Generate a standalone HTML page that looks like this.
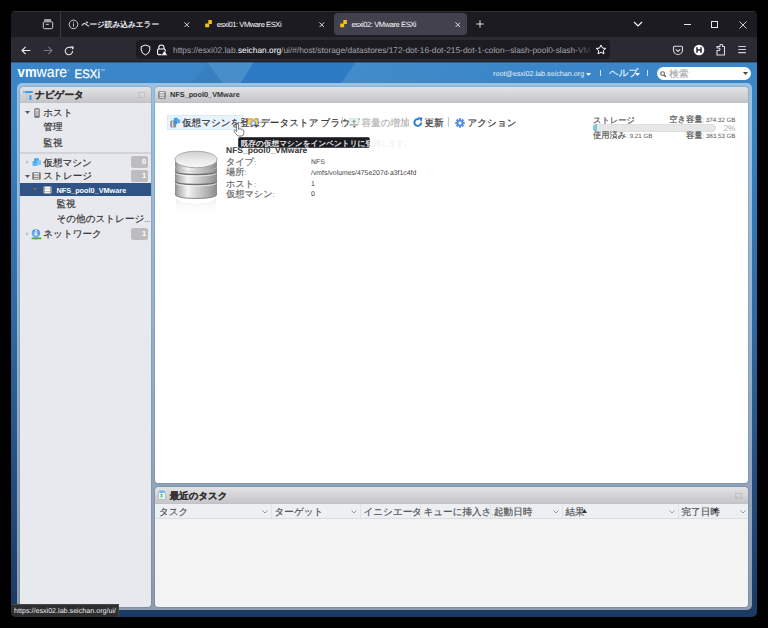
<!DOCTYPE html>
<html><head><meta charset="utf-8">
<style>
*{box-sizing:border-box;margin:0;padding:0}
html,body{width:768px;height:628px;overflow:hidden;background:#000;font-family:"Liberation Sans",sans-serif;text-rendering:geometricPrecision}
.a{position:absolute;white-space:nowrap}
.j{font-size:1.333em;line-height:0;-webkit-text-stroke:0.2px currentColor}
#win{position:absolute;left:0;top:0;width:768px;height:628px;clip-path:inset(11px 11px 11px 11px round 4px 4px 5px 5px)}
</style></head><body>
<div id="win">
  <div class="a" style="left:11px;top:11px;width:746px;height:26px;background:#1c1b22;border-top:1px solid #2e2d35"></div>
  <div class="a" style="left:60px;top:12px;width:1px;height:25px;background:#3a3940"></div>
  <div class="a" style="left:334px;top:13px;width:133px;height:22px;background:#42414d;border-radius:4px"></div>
  <div class="a" style="left:11px;top:37px;width:746px;height:25px;background:#2b2a33"></div>
  <div class="a" style="left:136px;top:40px;width:474px;height:19px;background:#1c1b22;border-radius:4px"></div>

  <!-- firefox chrome icons -->
  <svg class="a" style="left:42px;top:18px" width="12" height="12" viewBox="0 0 12 12"><path d="M2 3.2V2.4Q2 1.1 3.3 1.1H7.9Q9.2 1.1 9.2 2.4V3.2Z" fill="#a2a2a7"/><rect x="1.3" y="3.8" width="9.4" height="6.9" rx="1.2" fill="none" stroke="#cfcfd3" stroke-width="1"/><rect x="3.8" y="5.9" width="3" height="0.9" fill="#d8d8dc"/></svg>
  <svg class="a" style="left:68px;top:19px" width="11" height="11" viewBox="0 0 11 11"><circle cx="5.5" cy="5.4" r="4.3" fill="none" stroke="#d6d6da" stroke-width="0.95"/><rect x="5.05" y="4.4" width="0.9" height="3.3" fill="#d6d6da"/><rect x="5.05" y="2.7" width="0.9" height="0.9" fill="#d6d6da"/></svg>
  <svg class="a" style="left:184.1px;top:21.5px" width="5.6" height="5.6" viewBox="0 0 5.6 5.6"><path d="M0.4 0.4L5.2 5.2M5.2 0.4L0.4 5.2" stroke="#dcdce0" stroke-width="1"/></svg>
  <svg class="a" style="left:205px;top:20px" width="7" height="7.5" viewBox="0 0 7 7.5"><rect x="0.2" y="3.6" width="4" height="3.7" rx="0.5" fill="#f5c211"/><rect x="3.3" y="0.1" width="3.6" height="3.9" rx="0.5" fill="#f5c211"/></svg>
  <svg class="a" style="left:319.2px;top:21.5px" width="5.6" height="5.6" viewBox="0 0 5.6 5.6"><path d="M0.4 0.4L5.2 5.2M5.2 0.4L0.4 5.2" stroke="#dcdce0" stroke-width="1"/></svg>
  <svg class="a" style="left:340px;top:20px" width="7" height="7.5" viewBox="0 0 7 7.5"><rect x="0.2" y="3.6" width="4" height="3.7" rx="0.5" fill="#f5c211"/><rect x="3.3" y="0.1" width="3.6" height="3.9" rx="0.5" fill="#f5c211"/></svg>
  <svg class="a" style="left:454.7px;top:21.5px" width="5.6" height="5.6" viewBox="0 0 5.6 5.6"><path d="M0.4 0.4L5.2 5.2M5.2 0.4L0.4 5.2" stroke="#dcdce0" stroke-width="1"/></svg>
  <svg class="a" style="left:475px;top:19px" width="10" height="10" viewBox="0 0 10 10"><path d="M5 1.2V8.8M1.2 5H8.8" stroke="#e6e6ea" stroke-width="0.95"/></svg>
  <svg class="a" style="left:633px;top:21px" width="10" height="6" viewBox="0 0 10 6"><path d="M1 1L5 5L9 1" fill="none" stroke="#fbfbfe" stroke-width="1.1"/></svg>
  <div class="a" style="left:684px;top:23.5px;width:7px;height:1px;background:#e6e6ea"></div>
  <div class="a" style="left:711px;top:20.5px;width:7px;height:7px;border:1px solid #e6e6ea"></div>
  <svg class="a" style="left:738.5px;top:20.5px" width="8" height="8" viewBox="0 0 8 8"><path d="M0.5 0.5L7.5 7.5M7.5 0.5L0.5 7.5" stroke="#e6e6ea" stroke-width="0.9"/></svg>
  <!-- toolbar -->
  <svg class="a" style="left:21px;top:45.5px" width="10" height="9" viewBox="0 0 10 9"><path d="M9.3 4.5H1.2M4.6 0.9L1 4.5L4.6 8.1" fill="none" stroke="#ececf0" stroke-width="1.1"/></svg>
  <svg class="a" style="left:43px;top:45.5px" width="10" height="9" viewBox="0 0 10 9"><path d="M0.7 4.5H8.8M5.4 0.9L9 4.5L5.4 8.1" fill="none" stroke="#76757c" stroke-width="1.1"/></svg>
  <svg class="a" style="left:64px;top:45.5px" width="10" height="10" viewBox="0 0 10 10"><path d="M8.6 5A3.7 3.7 0 1 1 6.9 1.9" fill="none" stroke="#ececf0" stroke-width="1.05"/><path d="M6.2 0.3L9.6 0.5L9.2 3.9Z" fill="#ececf0"/></svg>
  <svg class="a" style="left:140px;top:44px" width="11" height="12" viewBox="0 0 11 12"><path d="M5.5 1L1.2 2.6V5.8Q1.5 9.4 5.5 11Q9.5 9.4 9.8 5.8V2.6Z" fill="none" stroke="#fbfbfe" stroke-width="1"/></svg>
  <svg class="a" style="left:156px;top:44px" width="12" height="12" viewBox="0 0 12 12"><path d="M2.8 5V3.6A2.6 2.6 0 0 1 8 3.6V5" fill="none" stroke="#fbfbfe" stroke-width="1.1"/><rect x="1.6" y="5" width="7.6" height="5.6" rx="1" fill="none" stroke="#fbfbfe" stroke-width="1.1"/><path d="M8.4 6.4L11.6 11.4H5.2Z" fill="#fbfbfe" stroke="#1c1b22" stroke-width="0.6"/></svg>
  <svg class="a" style="left:671.5px;top:45px" width="12" height="11" viewBox="0 0 12 11"><path d="M1.5 2.2Q1.5 1.2 2.5 1.2H9.5Q10.5 1.2 10.5 2.2V5A4.5 4.5 0 0 1 1.5 5Z" fill="none" stroke="#dcdce0" stroke-width="1.1"/><path d="M3.8 4.4L6 6.5L8.2 4.4" fill="none" stroke="#dcdce0" stroke-width="1.2"/></svg>
  <svg class="a" style="left:693px;top:44px" width="12" height="12" viewBox="0 0 12 12"><circle cx="6" cy="6" r="5.3" fill="#fbfbfe"/><path d="M4 3.2V8.8M8 3.2V8.8M4 6H8" stroke="#2b2a33" stroke-width="1.5"/></svg>
  <svg class="a" style="left:715px;top:44px" width="11" height="12" viewBox="0 0 11 12"><path d="M2 11V6.5H3.3A1.3 1.3 0 1 0 3.3 4H2V2.5H5V1.6A1.3 1.3 0 1 1 7.6 1.6V2.5H9.5V11Z" fill="none" stroke="#dcdce0" stroke-width="1.1" stroke-linejoin="round"/></svg>
  <svg class="a" style="left:738px;top:44px" width="8" height="10" viewBox="0 0 8 10"><path d="M0.3 2.4H7.9M0.3 5.5H7.9M0.3 8.6H7.9" stroke="#d0d0d4" stroke-width="1.05"/></svg>

<div class="a" style="left:81.6px;top:20px;font-size:5.74px;line-height:12px;color:#fbfbfe;"><span class="j">ページ読み込みエラー</span></div>
<div id="tab1" class="a" style="left:216.7px;top:19px;font-size:7.5px;line-height:12px;color:#fbfbfe;letter-spacing:-0.4px">esxi01: VMware ESXi</div>
<div class="a" style="left:351.6px;top:19px;font-size:7.5px;line-height:12px;color:#fbfbfe;letter-spacing:-0.4px">esxi02: VMware ESXi</div>
<div id="url" class="a" style="left:173px;top:44px;font-size:8.35px;line-height:12px;color:#a3a3a8;">https://esxi02.lab.<span style="color:#fbfbfe">seichan.org</span>/ui/#/host/storage/datastores/172-dot-16-dot-215-dot-1-colon--slash-pool0-slash-VM</div>
  <div class="a" style="left:575px;top:40px;width:18px;height:19px;background:linear-gradient(to right,rgba(28,27,34,0),#1c1b22)"></div>
  <div class="a" style="left:593px;top:40px;width:16px;height:19px;background:#1c1b22"></div>
  <svg class="a" style="left:595px;top:44px" width="12" height="11" viewBox="0 0 12 11"><path d="M6 1L7.5 4.1L10.8 4.4L8.3 6.6L9 9.9L6 8.2L3 9.9L3.7 6.6L1.2 4.4L4.5 4.1Z" fill="none" stroke="#fbfbfe" stroke-width="1" stroke-linejoin="round"/></svg>
<div class="a" style="left:11px;top:62px;width:746px;height:555px;background:linear-gradient(to bottom,#3a86c8 0px,#3783c4 60px,#2f6aa3 250px,#234d7e 420px,#1b3a63 555px)"></div>
<svg class="a" style="left:11px;top:62px" width="746" height="21" viewBox="0 0 746 21"><defs><linearGradient id="hl" x1="0" x2="1"><stop offset="0" stop-color="#fff" stop-opacity="0.05"/><stop offset="1" stop-color="#fff" stop-opacity="0"/></linearGradient></defs><polygon points="196,0 243,0 229.7,21 211.5,21" fill="#ffffff" opacity="0.08"/><polygon points="196,0 181.5,21 211.5,21" fill="#000" opacity="0.03"/><polygon points="243,0 344.6,0 330.3,21 229.7,21" fill="#1f6fc0" opacity="0.5"/><polygon points="344.6,0 520,0 520,21 330.3,21" fill="url(#hl)"/></svg>
<div class="a" style="left:11px;top:61px;width:746px;height:1px;background:#221e24"></div>
<div class="a" style="left:11px;top:62px;width:746px;height:1px;background:rgba(0,0,0,0.28)"></div>
<svg class="a" style="left:11px;top:62px" width="100" height="21" viewBox="0 0 100 21"><text x="6.6" y="14.7" font-size="15" font-weight="bold" fill="#fff" textLength="19" lengthAdjust="spacingAndGlyphs">vm</text><text x="25.6" y="14.7" font-size="15" fill="#fff" stroke="#fff" stroke-width="0.1" textLength="30.6" lengthAdjust="spacingAndGlyphs">ware</text><circle cx="57.6" cy="8.2" r="0.7" fill="#fff" opacity="0.7"/><text x="63.6" y="15.6" font-size="12.2" fill="#fff" stroke="#fff" stroke-width="0.3" textLength="25.4" lengthAdjust="spacingAndGlyphs">ESXi</text><rect x="90" y="7.5" width="4" height="1" fill="#fff" opacity="0.6"/></svg>
<div id="user" class="a" style="left:493px;top:68px;font-size:7.2px;line-height:12px;color:#e8f0f8;">root@esxi02.lab.seichan.org</div>
<svg class="a" style="left:586px;top:73px" width="5" height="3" viewBox="0 0 5 3"><path d="M0 0H5L2.5 3Z" fill="#fff"/></svg>
<div class="a" style="left:600px;top:70px;width:1px;height:6px;background:#cfe0f0"></div>
<div class="a" style="left:609px;top:68px;font-size:7.2px;line-height:12px;color:#e8f0f8;"><span class="j">ヘルプ</span></div>
<svg class="a" style="left:634.5px;top:73px" width="5" height="3" viewBox="0 0 5 3"><path d="M0 0H5L2.5 3Z" fill="#fff"/></svg>
<div class="a" style="left:647px;top:70px;width:1px;height:6px;background:#cfe0f0"></div>
<div class="a" style="left:657px;top:67px;width:94px;height:13px;background:#fff;border-radius:6.5px"></div>
<svg class="a" style="left:660.3px;top:70.5px" width="6.5" height="6.5" viewBox="0 0 6.5 6.5"><circle cx="2.6" cy="2.6" r="1.9" fill="none" stroke="#606060" stroke-width="1.1"/><path d="M4 4L6 6" stroke="#606060" stroke-width="1.3"/></svg>
<div class="a" style="left:669.3px;top:69px;font-size:7.2px;line-height:12px;color:#aaa;"><span class="j">検索</span></div>
<svg class="a" style="left:743px;top:72px" width="5" height="3" viewBox="0 0 5 3"><path d="M0 0H5L2.5 3Z" fill="#444"/></svg>
<div class="a" style="left:17px;top:83px;width:734.5px;height:527px;background:rgba(255,255,255,0.5);border-radius:5px"></div>
<div class="a" style="left:20px;top:87px;width:131px;height:520px;background:#e8e9ee;border-radius:4px 4px 3px 3px;box-shadow:0 0 1.5px rgba(0,0,0,0.5)"></div>
<div class="a" style="left:20px;top:87px;width:131px;height:15.5px;background:linear-gradient(#e3e3e5,#c6c6ca);border-radius:4px 4px 0 0;border-bottom:1px solid #c2c2c6"></div>
<svg class="a" style="left:23px;top:90px" width="10" height="10" viewBox="0 0 10 10"><rect x="0.3" y="1" width="9.4" height="2" fill="#3b9ae6"/><rect x="0.3" y="0.8" width="2.4" height="2.4" fill="#6cc0f5"/><rect x="3" y="3" width="1" height="6" fill="#b8c0cc"/><circle cx="7.4" cy="6.4" r="1.3" fill="#3b9ae6"/><circle cx="7.4" cy="8.7" r="1.3" fill="#3b9ae6"/></svg>
<div class="a" style="left:35px;top:90px;font-size:7.2px;line-height:12px;color:#333;font-weight:bold;"><span class="j">ナビゲータ</span></div>
<svg class="a" style="left:138px;top:92px" width="7" height="6" viewBox="0 0 7 6"><rect x="0.5" y="0.5" width="6" height="5" fill="#d8d8db" stroke="#c0c0c4" stroke-width="0.9"/><rect x="1" y="3" width="2.5" height="2" fill="#c4c4c7"/></svg>
<svg class="a" style="left:25px;top:111px" width="5" height="3" viewBox="0 0 5 3"><path d="M0 0H5L2.5 3Z" fill="#555"/></svg>
<svg class="a" style="left:34px;top:108px" width="6" height="10" viewBox="0 0 6 10"><rect x="0.3" y="0.3" width="5.4" height="9.4" rx="1.3" fill="#6e6e6e"/><rect x="1.2" y="1.3" width="3.6" height="6.8" rx="0.4" fill="#b8b8b8"/><rect x="1.6" y="2" width="2.8" height="1" fill="#e6e6e6"/></svg>
<div class="a" style="left:43.3px;top:108px;font-size:7.2px;line-height:12px;color:#333;"><span class="j">ホスト</span></div>
<div class="a" style="left:43.3px;top:122px;font-size:7.2px;line-height:12px;color:#333;"><span class="j">管理</span></div>
<div class="a" style="left:43.3px;top:138px;font-size:7.2px;line-height:12px;color:#333;"><span class="j">監視</span></div>
<div class="a" style="left:20px;top:152px;width:131px;height:2px;background:#d3d4d8"></div>
<svg class="a" style="left:26px;top:159.5px" width="3" height="4" viewBox="0 0 3 4"><path d="M0 0V4L3 2Z" fill="#c4c4c8"/></svg>
<svg class="a" style="left:32px;top:158px" width="9" height="8" viewBox="0 0 9 8"><rect x="0.5" y="3" width="5" height="5" rx="0.8" fill="#63b2f2"/><rect x="2" y="0.3" width="5" height="5" rx="0.8" fill="#4aa4ee"/><rect x="4.5" y="2.2" width="4.5" height="4.8" rx="0.8" fill="#7cc4f7"/></svg>
<div class="a" style="left:43.3px;top:158px;font-size:7.2px;line-height:12px;color:#333;"><span class="j">仮想マシン</span></div>
<div class="a" style="left:130.5px;top:155.5px;width:17px;height:12px;background:#bdbdbf;border-radius:2px"></div>
<div class="a" style="right:622px;top:156px;font-size:7.4px;line-height:12px;color:#fff;font-weight:bold;">0</div>
<svg class="a" style="left:25px;top:175px" width="5" height="3" viewBox="0 0 5 3"><path d="M0 0H5L2.5 3Z" fill="#555"/></svg>
<svg class="a" style="left:32px;top:172px" width="9" height="8" viewBox="0 0 9 8"><rect x="0.2" y="0.2" width="8.6" height="7.6" rx="1.3" fill="#7d7d7d"/><rect x="2" y="1" width="5" height="1.6" fill="#e8e8e8"/><rect x="2" y="3.4" width="5" height="1.6" fill="#dcdcdc"/><rect x="2" y="5.8" width="5" height="1.4" fill="#d0d0d0"/></svg>
<div class="a" style="left:43.3px;top:171px;font-size:7.2px;line-height:12px;color:#333;"><span class="j">ストレージ</span></div>
<div class="a" style="left:130.5px;top:169.5px;width:17px;height:12px;background:#bdbdbf;border-radius:2px"></div>
<div class="a" style="right:622px;top:170px;font-size:7.4px;line-height:12px;color:#fff;font-weight:bold;">1</div>
<div class="a" style="left:20px;top:182.6px;width:131px;height:13px;background:#2e5384"></div>
<svg class="a" style="left:33px;top:188px" width="4" height="2.5" viewBox="0 0 4 2.5"><path d="M0 0H4L2 2.5Z" fill="#8a6a4a"/></svg>
<svg class="a" style="left:43px;top:186px" width="9" height="8" viewBox="0 0 9 8"><rect x="0.2" y="0.2" width="8.6" height="7.6" rx="1.3" fill="#9a9a9a"/><rect x="1.8" y="0.8" width="5.4" height="1.8" fill="#fff"/><rect x="1.8" y="3.2" width="5.4" height="1.8" fill="#fff"/><rect x="1.8" y="5.6" width="5.4" height="1.6" fill="#f0f0f0"/></svg>
<div id="selnfs" class="a" style="left:56.5px;top:185px;font-size:7.3px;line-height:12px;color:#fff;font-weight:bold;">NFS_pool0_VMware</div>
<div class="a" style="left:56.5px;top:199px;font-size:7.2px;line-height:12px;color:#333;"><span class="j">監視</span></div>
<div class="a" style="left:56.5px;top:214px;font-size:7.2px;line-height:12px;color:#333;"><span class="j">その他のストレージ</span>...</div>
<svg class="a" style="left:26px;top:232px" width="3" height="4" viewBox="0 0 3 4"><path d="M0 0V4L3 2Z" fill="#c4c4c8"/></svg>
<svg class="a" style="left:31px;top:228.5px" width="11" height="11" viewBox="0 0 11 11"><defs><radialGradient id="gl" cx="0.45" cy="0.6" r="0.6"><stop offset="0" stop-color="#a8d8ff"/><stop offset="1" stop-color="#3f86de"/></radialGradient></defs><circle cx="4.9" cy="4.3" r="4.1" fill="url(#gl)"/><path d="M4.2 1.2Q6.4 1.8 5.2 3.4Q3.8 4.8 5.8 6.6" fill="none" stroke="#ffffff" stroke-width="1.2" opacity="0.85"/><rect x="0.6" y="8.4" width="9.8" height="1.9" rx="0.5" fill="#2cc12c"/><rect x="3.6" y="8.4" width="3" height="1.9" fill="#8a8a8a"/></svg>
<div class="a" style="left:43.3px;top:229px;font-size:7.2px;line-height:12px;color:#333;"><span class="j">ネットワーク</span></div>
<div class="a" style="left:130.5px;top:227.5px;width:17px;height:12px;background:#bdbdbf;border-radius:2px"></div>
<div class="a" style="right:622px;top:228px;font-size:7.4px;line-height:12px;color:#fff;font-weight:bold;">1</div>
<div class="a" style="left:155px;top:87px;width:593px;height:396px;background:#fff;border-radius:4px 4px 3px 3px;box-shadow:0 0 1.5px rgba(0,0,0,0.5)"></div>
<div class="a" style="left:155px;top:87px;width:593px;height:15.5px;background:linear-gradient(#e3e3e5,#c6c6ca);border-radius:4px 4px 0 0;border-bottom:1px solid #c2c2c6"></div>
<svg class="a" style="left:158px;top:91px" width="8" height="8" viewBox="0 0 8 8"><rect x="0.2" y="0.2" width="7.6" height="7.6" rx="1.3" fill="#777"/><rect x="1.5" y="0.9" width="5" height="1.6" fill="#eee"/><rect x="1.5" y="3.2" width="5" height="1.6" fill="#e4e4e4"/><rect x="1.5" y="5.5" width="5" height="1.5" fill="#d8d8d8"/></svg>
<div id="hdrnfs" class="a" style="left:170px;top:89px;font-size:7.3px;line-height:12px;color:#333;font-weight:bold;">NFS_pool0_VMware</div>
<div class="a" style="left:167px;top:115px;width:76px;height:15px;background:#e8f4fd;border:1px solid #d6eafa"></div>
<svg class="a" style="left:170px;top:117px" width="11" height="11" viewBox="0 0 11 11"><rect x="0.2" y="3.6" width="6" height="6.8" rx="1.5" fill="#8c8c8c"/><rect x="1.8" y="4.2" width="1.6" height="6" fill="#d8d8d8"/><rect x="3.8" y="0.8" width="4" height="4" rx="0.6" fill="#4a9ee8"/><rect x="3.8" y="3.8" width="3.2" height="3.2" rx="0.6" fill="#3d8fe0"/><rect x="6.6" y="2.2" width="3.6" height="4" rx="0.6" fill="#5aaaf0"/></svg>
<div class="a" style="left:182px;top:118px;font-size:7.2px;line-height:12px;color:#333;"><span class="j">仮想マシンを登録</span></div>
<svg class="a" style="left:247px;top:117px" width="12" height="11" viewBox="0 0 12 11"><path d="M0.8 2Q0.8 1 1.8 1H4.5L5.5 2H9.5Q10.5 2 10.5 3V7.5H0.8Z" fill="#e8b84a"/><rect x="0.8" y="3" width="9.8" height="4.6" fill="#f5cf6a"/><circle cx="6.2" cy="6.2" r="2.4" fill="#cfe6f5" stroke="#6a8aa0" stroke-width="0.9"/><path d="M7.8 7.8L10.2 10" stroke="#3d4f5c" stroke-width="1.3"/></svg>
<div id="dsb" class="a" style="left:260px;top:118px;font-size:7.2px;line-height:12px;color:#333;"><span class="j">データストア</span> <span class="j">ブラウザ</span></div>
<div class="a" style="left:342px;top:117px;width:1px;height:10px;background:#c8c8c8"></div>
<svg class="a" style="left:349px;top:118px" width="10" height="8" viewBox="0 0 10 8"><rect x="0.5" y="0.5" width="9" height="7" fill="#e6f4ea" stroke="#cfe5d4" stroke-width="0.8"/><path d="M5 1.5L3 4H4.3V5.5H5.7V4H7Z" fill="#9a9a9a"/><rect x="1" y="6" width="8" height="1.5" fill="#b8b8b8"/></svg>
<div class="a" style="left:361.5px;top:118px;font-size:7.2px;line-height:12px;color:#b4b4b4;"><span class="j">容量の増加</span></div>
<div class="a" style="left:406px;top:117px;width:1px;height:10px;background:#c8c8c8"></div>
<svg class="a" style="left:413px;top:117px" width="10" height="10" viewBox="0 0 10 10"><path d="M8.2 5.6A3.4 3.4 0 1 1 6 2.3" fill="none" stroke="#2d7fdc" stroke-width="2"/><path d="M4.8 0.2L9.4 0.6L8.6 5Z" fill="#2d7fdc"/></svg>
<div class="a" style="left:424.5px;top:118px;font-size:7.2px;line-height:12px;color:#333;"><span class="j">更新</span></div>
<div class="a" style="left:448px;top:117px;width:1px;height:10px;background:#c8c8c8"></div>
<svg class="a" style="left:455px;top:117.5px" width="10" height="10" viewBox="0 0 10 10"><g transform="translate(5 5)"><circle r="3.3" fill="#5b8fd6"/><g fill="#5b8fd6"><rect x="-1.1" y="-4.8" width="2.2" height="9.6"/><rect x="-1.1" y="-4.8" width="2.2" height="9.6" transform="rotate(45)"/><rect x="-1.1" y="-4.8" width="2.2" height="9.6" transform="rotate(90)"/><rect x="-1.1" y="-4.8" width="2.2" height="9.6" transform="rotate(135)"/></g><circle r="1.5" fill="#fff"/></g></svg>
<div class="a" style="left:467.5px;top:118px;font-size:7.2px;line-height:12px;color:#333;"><span class="j">アクション</span></div>
<div class="a" style="left:593px;top:116px;font-size:6.2px;line-height:12px;color:#555;"><span class="j">ストレージ</span></div>
<div class="a" style="right:32.5px;top:115px;font-size:6.2px;line-height:12px;color:#555;"><span class="j">空き容量</span>: 374.32 GB</div>
<div class="a" style="left:593px;top:124px;width:123px;height:8px;background:#e6e6e6;border:1px solid #dedede;border-radius:4px"></div>
<div class="a" style="left:593px;top:124px;width:3.5px;height:8px;background:#7cc6dc;border-radius:4px 0 0 4px"></div>
<div class="a" style="right:32.5px;top:122px;font-size:8.3px;line-height:12px;color:#aaa;">2%</div>
<div class="a" style="left:593px;top:131px;font-size:6.2px;line-height:12px;color:#555;"><span class="j">使用済み</span>: 9.21 GB</div>
<div class="a" style="right:32.5px;top:131px;font-size:6.2px;line-height:12px;color:#555;"><span class="j">容量</span>: 383.53 GB</div>
<svg class="a" style="left:173px;top:149px" width="46" height="66" viewBox="0 0 46 66">
<defs>
<linearGradient id="cyl" x1="0" x2="1" y1="0" y2="0"><stop offset="0" stop-color="#8e8e8e"/><stop offset="0.1" stop-color="#b8b8b8"/><stop offset="0.3" stop-color="#f4f4f4"/><stop offset="0.5" stop-color="#d6d6d6"/><stop offset="0.8" stop-color="#acacac"/><stop offset="1" stop-color="#8a8a8a"/></linearGradient>
<linearGradient id="top" x1="0" x2="0" y1="0" y2="1"><stop offset="0" stop-color="#d0d0d0"/><stop offset="0.6" stop-color="#ececec"/><stop offset="1" stop-color="#f8f8f8"/></linearGradient>
<linearGradient id="refl" x1="0" x2="0" y1="0" y2="1"><stop offset="0" stop-color="#e4e4e4"/><stop offset="1" stop-color="#ffffff" stop-opacity="0"/></linearGradient>
<clipPath id="bd"><rect x="2.3" y="0" width="41.4" height="66"/></clipPath>
</defs>
<path d="M3 48Q3 54 23 54.5Q43 54 43 48V64H3Z" fill="url(#refl)"/>
<path d="M2 10.5V45Q2 49.3 23 49.5Q44 49.3 44 45V10.5Z" fill="url(#cyl)"/>
<ellipse cx="23" cy="10.5" rx="21" ry="8.3" fill="url(#top)" stroke="#a4a4a4" stroke-width="0.9"/>
<path d="M2.2 18Q3 22 23 22.5Q43 22 43.8 18" fill="none" stroke="#c0c0c0" stroke-width="0.6"/>
<path clip-path="url(#bd)" d="M2 22Q2 25.3 23 25.5Q44 25.3 44 22" fill="none" stroke="#6e6e6e" stroke-width="1.3"/>
<path clip-path="url(#bd)" d="M2 23.5Q2 26.8 23 27Q44 26.8 44 23.5" fill="none" stroke="#f6f6f6" stroke-width="0.9" opacity="0.8"/>
<path clip-path="url(#bd)" d="M2 32Q2 35.3 23 35.5Q44 35.3 44 32" fill="none" stroke="#6e6e6e" stroke-width="1.3"/>
<path clip-path="url(#bd)" d="M2 33.5Q2 36.8 23 37Q44 36.8 44 33.5" fill="none" stroke="#f6f6f6" stroke-width="0.9" opacity="0.8"/>
<path d="M2 45Q2 49.3 23 49.5Q44 49.3 44 45" fill="none" stroke="#7e7e7e" stroke-width="0.9"/>
</svg>
<div id="title" class="a" style="left:226px;top:144px;font-size:8.5px;line-height:12px;color:#333;font-weight:bold;">NFS_pool0_VMware</div>
<div class="a" style="left:226px;top:158px;font-size:6.9px;line-height:12px;color:#6a6a6a;"><span class="j">タイプ</span>:</div>
<div class="a" style="left:311px;top:157px;font-size:6.9px;line-height:12px;color:#444;">NFS</div>
<div class="a" style="left:226px;top:168px;font-size:6.9px;line-height:12px;color:#6a6a6a;"><span class="j">場所</span>:</div>
<div id="vmfs" class="a" style="left:311px;top:168px;font-size:6.9px;line-height:12px;color:#444;">/vmfs/volumes/475e207d-a3f1c4fd</div>
<div class="a" style="left:226px;top:180px;font-size:6.9px;line-height:12px;color:#6a6a6a;"><span class="j">ホスト</span>:</div>
<div class="a" style="left:311px;top:179px;font-size:6.9px;line-height:12px;color:#444;">1</div>
<div class="a" style="left:226px;top:190px;font-size:6.9px;line-height:12px;color:#6a6a6a;"><span class="j">仮想マシン</span>:</div>
<div class="a" style="left:311px;top:189px;font-size:6.9px;line-height:12px;color:#444;">0</div>
<div class="a" style="left:155px;top:487px;width:593px;height:120px;background:#f3f3f3;border-radius:4px 4px 3px 3px;box-shadow:0 0 1.5px rgba(0,0,0,0.5)"></div>
<div class="a" style="left:155px;top:487px;width:593px;height:16.5px;background:linear-gradient(#e3e3e5,#c6c6ca);border-radius:4px 4px 0 0;border-bottom:1px solid #c2c2c6"></div>
<svg class="a" style="left:158px;top:490px" width="8" height="10" viewBox="0 0 8 10"><rect x="0.5" y="1.6" width="7" height="8" rx="1" fill="#eef6fc" stroke="#a4aab0" stroke-width="0.7"/><rect x="1.2" y="0.5" width="5.6" height="2.4" rx="1" fill="#6cb4ea"/><path d="M2.2 4.6L4.6 4.4L2.6 6.3L4.8 6.1L2.7 8" fill="none" stroke="#62c46e" stroke-width="0.95"/></svg>
<div class="a" style="left:169.8px;top:491px;font-size:7.1px;line-height:12px;color:#333;font-weight:bold;"><span class="j">最近のタスク</span></div>
<svg class="a" style="left:735px;top:493px" width="7" height="6" viewBox="0 0 7 6"><rect x="0.5" y="0.5" width="6" height="5" fill="none" stroke="#bdbdc0" stroke-width="0.9"/><rect x="1" y="3" width="2.5" height="2" fill="#c4c4c7"/></svg>
<div class="a" style="left:155px;top:503.5px;width:593px;height:15px;background:#edf0f3;border-bottom:1px solid #dadde1"></div>
<div class="a" style="left:159px;top:507px;font-size:7.2px;line-height:12px;color:#555;"><span class="j">タスク</span></div>
<svg class="a" style="left:262.0px;top:509.5px" width="6" height="4" viewBox="0 0 6 4"><path d="M0.5 0.5L3 3L5.5 0.5" fill="none" stroke="#9a9a9a" stroke-width="1"/></svg>
<div class="a" style="left:270.5px;top:504px;width:1px;height:14px;background:#dfe2e6"></div>
<div class="a" style="left:274.5px;top:507px;font-size:7.2px;line-height:12px;color:#555;"><span class="j">ターゲット</span></div>
<svg class="a" style="left:351.0px;top:509.5px" width="6" height="4" viewBox="0 0 6 4"><path d="M0.5 0.5L3 3L5.5 0.5" fill="none" stroke="#9a9a9a" stroke-width="1"/></svg>
<div class="a" style="left:359.5px;top:504px;width:1px;height:14px;background:#dfe2e6"></div>
<div class="a" style="left:363.5px;top:507px;font-size:7.2px;line-height:12px;color:#555;"><span class="j">イニシエータ</span></div>
<svg class="a" style="left:411.0px;top:509.5px" width="6" height="4" viewBox="0 0 6 4"><path d="M0.5 0.5L3 3L5.5 0.5" fill="none" stroke="#9a9a9a" stroke-width="1"/></svg>
<div class="a" style="left:419.5px;top:504px;width:1px;height:14px;background:#dfe2e6"></div>
<div class="a" style="left:423.5px;top:507px;font-size:7.2px;line-height:12px;color:#555;"><span class="j">キューに挿入さ</span>...</div>
<svg class="a" style="left:481.5px;top:509.5px" width="6" height="4" viewBox="0 0 6 4"><path d="M0.5 0.5L3 3L5.5 0.5" fill="none" stroke="#9a9a9a" stroke-width="1"/></svg>
<div class="a" style="left:490px;top:504px;width:1px;height:14px;background:#dfe2e6"></div>
<div class="a" style="left:494px;top:507px;font-size:7.2px;line-height:12px;color:#555;"><span class="j">起動日時</span></div>
<svg class="a" style="left:553.0px;top:509.5px" width="6" height="4" viewBox="0 0 6 4"><path d="M0.5 0.5L3 3L5.5 0.5" fill="none" stroke="#9a9a9a" stroke-width="1"/></svg>
<div class="a" style="left:561.5px;top:504px;width:1px;height:14px;background:#dfe2e6"></div>
<div class="a" style="left:565.5px;top:507px;font-size:7.2px;line-height:12px;color:#555;"><span class="j">結果</span></div>
<svg class="a" style="left:582.4px;top:509px" width="5" height="4" viewBox="0 0 5 4"><path d="M0 4H5L2.5 0Z" fill="#333"/></svg>
<svg class="a" style="left:669.0px;top:509.5px" width="6" height="4" viewBox="0 0 6 4"><path d="M0.5 0.5L3 3L5.5 0.5" fill="none" stroke="#9a9a9a" stroke-width="1"/></svg>
<div class="a" style="left:677.5px;top:504px;width:1px;height:14px;background:#dfe2e6"></div>
<div class="a" style="left:681.5px;top:507px;font-size:7.2px;line-height:12px;color:#555;"><span class="j">完了日時</span></div>
<svg class="a" style="left:712.8px;top:509px" width="5" height="4" viewBox="0 0 5 4"><path d="M0 0H5L2.5 4Z" fill="#333"/></svg>
<svg class="a" style="left:739.5px;top:509.5px" width="6" height="4" viewBox="0 0 6 4"><path d="M0.5 0.5L3 3L5.5 0.5" fill="none" stroke="#9a9a9a" stroke-width="1"/></svg>
<div class="a" style="left:238px;top:137px;width:132px;height:10.5px;background:#1c1b22;border:1px solid #4a4a52;border-radius:2px"></div>
<div class="a" style="left:240.7px;top:139px;font-size:5.75px;line-height:12px;color:#f4f4f4;"><span class="j">既存の仮想マシンをインベントリに登録します。</span></div>
<svg class="a" style="left:233px;top:123px" width="12" height="14" viewBox="0 0 12 14"><path d="M3.6 1.8Q3.6 0.9 4.6 0.9Q5.6 0.9 5.6 1.8V6.4Q6.2 5.7 7 5.9Q7.8 5.7 8.2 6.4Q8.9 6.1 9.5 6.8Q10.8 6.9 10.8 8.2V10.3Q10.8 13.1 8 13.1H6.2Q4.6 13.1 3.6 11.7L1.1 8.5Q0.7 7.6 1.5 7.3Q2.2 7.1 2.9 7.8L3.6 8.6Z" fill="#fff" stroke="#6a6a6a" stroke-width="0.9" stroke-linejoin="round"/></svg>
<div class="a" style="left:11px;top:604px;width:108px;height:13px;background:#2e2e30;border:1px solid #48484a;border-left:none;border-bottom:none"></div>
<div id="status" class="a" style="left:14px;top:605px;font-size:7.15px;line-height:12px;color:#ececee;">https://esxi02.lab.seichan.org/ui/</div>
</div>
</body></html>
